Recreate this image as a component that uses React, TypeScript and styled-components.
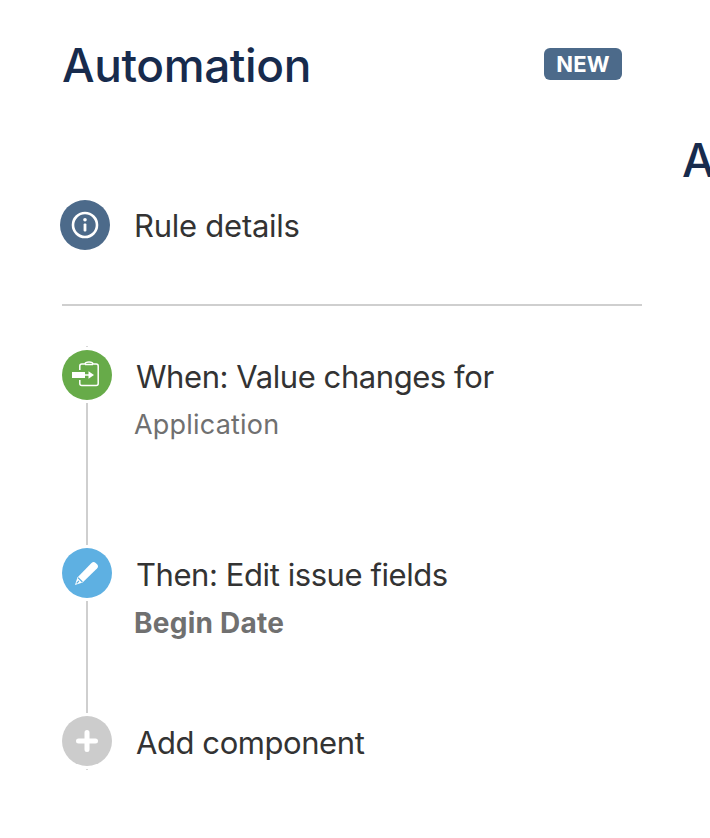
import React from "react";
import styled, { createGlobalStyle } from "styled-components";

const Global = createGlobalStyle`
  html, body { margin: 0; padding: 0; background: #fff; }
  body { font-family: Inter, Roboto, "Liberation Sans", sans-serif; overflow: hidden; }
`;

const Page = styled.div`
  width: 710px;
  height: 838px;
  display: flex;
  overflow: hidden;
  box-sizing: border-box;
  padding-left: 60px;
`;

const Sidebar = styled.aside`
  width: 582px;
  flex: none;
  display: flex;
  flex-direction: column;
`;

const Header = styled.header`
  display: flex;
  align-items: center;
  justify-content: space-between;
  height: 52px;
  margin-top: 39px;
  padding-left: 2px;
  padding-right: 20px;
`;

const Title = styled.h1`
  margin: 0;
  font-size: 46px;
  line-height: 52px;
  font-weight: 500;
  letter-spacing: -0.4px;
  color: #172b4d;
`;

const Badge = styled.span`
  width: 78px;
  height: 32px;
  margin-top: -2px;
  border-radius: 6px;
  background: #4c6a8a;
  color: #fff;
  font-size: 22px;
  font-weight: 700;
  letter-spacing: 0.2px;
  display: flex;
  align-items: center;
  justify-content: center;
`;

const Details = styled.div`
  display: flex;
  align-items: center;
  gap: 25px;
  margin-top: 109px;
  height: 50px;
`;

const Divider = styled.hr`
  margin: 54px 0 0 2px;
  border: 0;
  height: 2px;
  background: #cfcfcf;
`;

const Timeline = styled.div`
  display: flex;
  flex-direction: column;
  padding-left: 2px;
  margin-top: 44px;
`;

const Step = styled.div<{ $height: number }>`
  display: flex;
  gap: 25px;
  height: ${(p) => p.$height}px;
`;

const Rail = styled.div`
  width: 50px;
  flex: none;
  display: flex;
  flex-direction: column;
  align-items: center;
`;

const Dot = styled.div<{ $color: string; $tick?: "top" | "bottom" }>`
  position: relative;
  width: 50px;
  height: 50px;
  flex: none;
  border-radius: 50%;
  background: ${(p) => p.$color};
  display: flex;
  align-items: center;
  justify-content: center;
  &::after {
    content: "";
    display: ${(p) => (p.$tick ? "block" : "none")};
    position: absolute;
    left: 24px;
    ${(p) => (p.$tick === "top" ? "top: -4px;" : "bottom: -4px;")}
    width: 2px;
    height: 1px;
    background: #d8d8d8;
  }
`;

const Line = styled.div`
  width: 2px;
  flex: 1;
  margin-top: 3px;
  margin-bottom: 3px;
  background: #cfcfcf;
`;

const Body = styled.div`
  display: flex;
  flex-direction: column;
`;

const Label = styled.div<{ $tracking?: number }>`
  font-size: 31px;
  line-height: 50px;
  height: 50px;
  letter-spacing: ${(p) => p.$tracking ?? -0.43}px;
  color: #333;
  white-space: nowrap;
  margin-left: -1px;
  padding-top: 2px;
`;

const Sub = styled.div<{ $bold?: boolean }>`
  margin-left: -3px;
  font-size: ${(p) => (p.$bold ? 28 : 27)}px;
  line-height: 36px;
  letter-spacing: ${(p) => (p.$bold ? 0.25 : 0.2)}px;
  margin-top: 5px;
  color: #707070;
  font-weight: ${(p) => (p.$bold ? 700 : 400)};
`;

const Main = styled.main`
  flex: none;
  padding-left: 40px;
  padding-top: 134px;
`;

const MainHeading = styled.h2`
  margin: 0;
  font-size: 46px;
  line-height: 52px;
  font-weight: 500;
  color: #172b4d;
  white-space: nowrap;
`;

export default function App() {
  return (
    <Page>
      <Global />
      <Sidebar>
        <Header>
          <Title>Automation</Title>
          <Badge>NEW</Badge>
        </Header>
        <Details>
          <Dot $color="#4c6a8a">
            <svg width="28" height="28" viewBox="0 0 28 28" fill="none">
              <circle cx="14" cy="14" r="12" stroke="#fff" strokeWidth="2.6" />
              <rect x="12.6" y="12.4" width="2.8" height="8" rx="1" fill="#fff" />
              <circle cx="14" cy="8.8" r="1.8" fill="#fff" />
            </svg>
          </Dot>
          <Label $tracking={-0.25}>Rule details</Label>
        </Details>
        <Divider />
        <Timeline>
          <Step $height={198}>
            <Rail>
              <Dot $color="#67ab49" $tick="top">
                <svg width="36" height="36" viewBox="0 0 36 36" fill="none">
                  <path
                    d="M10.8 13V9a2 2 0 0 1 2-2h3.2c.4-2.8 7.6-2.8 8 0h3.2a2 2 0 0 1 2 2v17.5a2 2 0 0 1-2 2H12.8a2 2 0 0 1-2-2V23"
                    stroke="#fff"
                    strokeWidth="1.5"
                  />
                  <path d="M16 7.5h8" stroke="#fff" strokeWidth="1.5" />
                  <rect x="3" y="15" width="13" height="6" fill="#fff" />
                  <path d="M16 18h4" stroke="#fff" strokeWidth="1.5" />
                  <path d="M19.5 14.2l5.5 3.8-5.5 3.8z" fill="#fff" />
                </svg>
              </Dot>
              <Line />
            </Rail>
            <Body>
              <Label>When: Value changes for</Label>
              <Sub>Application</Sub>
            </Body>
          </Step>
          <Step $height={168}>
            <Rail>
              <Dot $color="#5eb0e2">
                <svg width="30" height="30" viewBox="0 0 30 30" fill="none">
                  <path d="M3 27l2.4-7.6L19.5 5a3 3 0 0 1 4.2 0l1.3 1.3a3 3 0 0 1 0 4.2L10.6 24.6z" fill="#fff" />
                  <path d="M6 19.6l4.4 4.4M4.7 25.3l2.2-2.4" stroke="#5eb0e2" strokeWidth="1.2" />
                </svg>
              </Dot>
              <Line />
            </Rail>
            <Body>
              <Label>Then: Edit issue fields</Label>
              <Sub $bold>Begin Date</Sub>
            </Body>
          </Step>
          <Step $height={50}>
            <Rail>
              <Dot $color="#cccccc" $tick="bottom">
                <svg width="22" height="22" viewBox="0 0 22 22" fill="none">
                  <path d="M11 2.5v17M2.5 11h17" stroke="#fff" strokeWidth="5" strokeLinecap="round" />
                </svg>
              </Dot>
            </Rail>
            <Body>
              <Label>Add component</Label>
            </Body>
          </Step>
        </Timeline>
      </Sidebar>
      <Main>
        <MainHeading>A</MainHeading>
      </Main>
    </Page>
  );
}
